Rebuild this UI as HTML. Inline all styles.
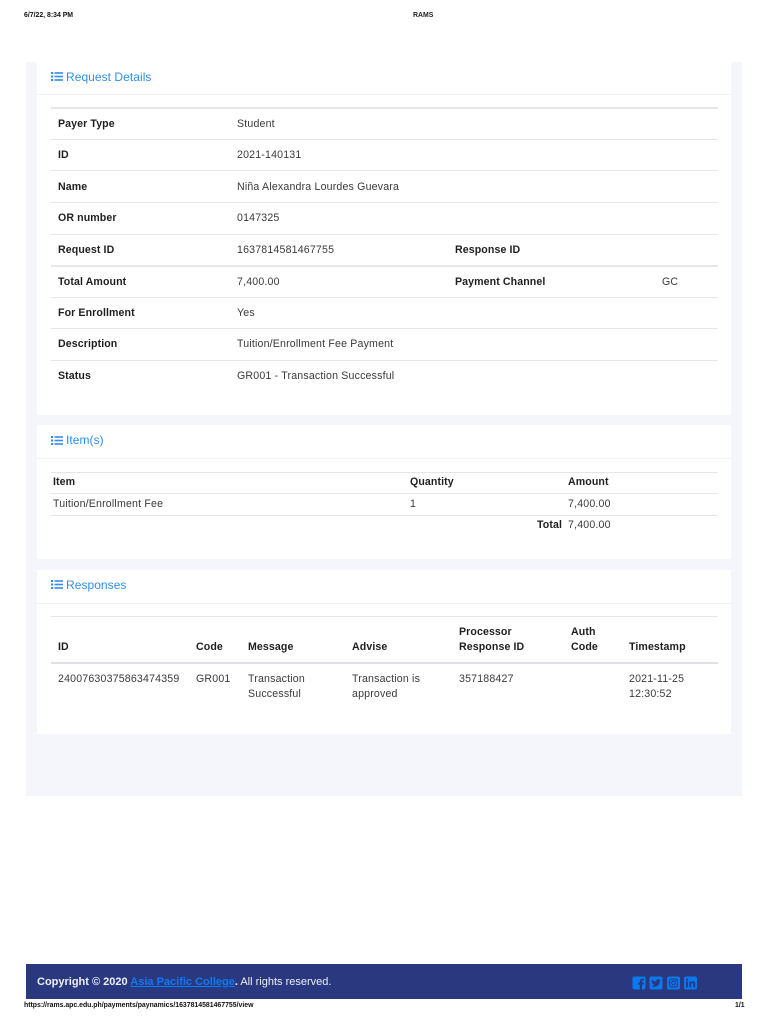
<!DOCTYPE html>
<html>
<head>
<meta charset="utf-8">
<title>RAMS</title>
<style>
html,body{margin:0;padding:0;background:#fff}
body{width:768px;height:1024px;position:relative;overflow:hidden;font-family:"Liberation Sans",sans-serif;color:#333}
div,a,svg{position:absolute}
.t{font-size:10.6px;line-height:14px;white-space:nowrap;color:#3a3a3a;letter-spacing:.18px}
.b{font-weight:700;color:#1f1f1f;letter-spacing:.1px}
.h{font-size:12px;line-height:16px;white-space:nowrap;color:#2f8fe8;letter-spacing:.05px}
.p{font-size:6.9px;line-height:8px;white-space:nowrap;color:#111;font-weight:700}
.l{left:51px;width:667px;height:1px;background:#e4e6ea}
.c{left:37px;width:694px;background:#fff}
.r{left:37px;width:694px;height:1px;background:#f1f2f5}
</style>
</head>
<body>
<div class="p" style="left:24px;top:12px">6/7/22, 8:34 PM</div>
<div class="p" style="left:413px;top:12px;color:#222">RAMS</div>

<div style="left:26px;top:62px;width:716px;height:734px;background:#f4f6fb"></div>

<div class="c" style="top:62px;height:353px"></div>
<div class="c" style="top:425px;height:134px"></div>
<div class="c" style="top:570px;height:164px"></div>
<div class="r" style="top:94px"></div>
<div class="r" style="top:458px"></div>
<div class="r" style="top:603px"></div>

<svg style="left:51px;top:71px" width="12" height="11" viewBox="0 0 12 11"><g fill="#2f8fe8"><rect x="0" y="1" width="2.2" height="2"/><rect x="0" y="4.5" width="2.2" height="2"/><rect x="0" y="8" width="2.2" height="2"/><rect x="3.5" y="1.2" width="8.5" height="1.6"/><rect x="3.5" y="4.7" width="8.5" height="1.6"/><rect x="3.5" y="8.2" width="8.5" height="1.6"/></g></svg>
<div class="h" style="left:66px;top:69px">Request Details</div>
<svg style="left:51px;top:435px" width="12" height="11" viewBox="0 0 12 11"><g fill="#2f8fe8"><rect x="0" y="1" width="2.2" height="2"/><rect x="0" y="4.5" width="2.2" height="2"/><rect x="0" y="8" width="2.2" height="2"/><rect x="3.5" y="1.2" width="8.5" height="1.6"/><rect x="3.5" y="4.7" width="8.5" height="1.6"/><rect x="3.5" y="8.2" width="8.5" height="1.6"/></g></svg>
<div class="h" style="left:66px;top:432px">Item(s)</div>
<svg style="left:51px;top:579px" width="12" height="11" viewBox="0 0 12 11"><g fill="#2f8fe8"><rect x="0" y="1" width="2.2" height="2"/><rect x="0" y="4.5" width="2.2" height="2"/><rect x="0" y="8" width="2.2" height="2"/><rect x="3.5" y="1.2" width="8.5" height="1.6"/><rect x="3.5" y="4.7" width="8.5" height="1.6"/><rect x="3.5" y="8.2" width="8.5" height="1.6"/></g></svg>
<div class="h" style="left:66px;top:577px">Responses</div>

<!-- Request details lines -->
<div class="l" style="top:107px;height:2px"></div>
<div class="l" style="top:139px"></div>
<div class="l" style="top:170px"></div>
<div class="l" style="top:202px"></div>
<div class="l" style="top:234px"></div>
<div class="l" style="top:265px;height:2px"></div>
<div class="l" style="top:297px"></div>
<div class="l" style="top:328px"></div>
<div class="l" style="top:360px"></div>

<div class="t b" style="left:58px;top:117px">Payer Type</div>
<div class="t" style="left:237px;top:117px">Student</div>
<div class="t b" style="left:58px;top:148px">ID</div>
<div class="t" style="left:237px;top:148px">2021-140131</div>
<div class="t b" style="left:58px;top:180px">Name</div>
<div class="t" style="left:237px;top:180px">Niña Alexandra Lourdes Guevara</div>
<div class="t b" style="left:58px;top:211px">OR number</div>
<div class="t" style="left:237px;top:211px">0147325</div>
<div class="t b" style="left:58px;top:243px">Request ID</div>
<div class="t" style="left:237px;top:243px">1637814581467755</div>
<div class="t b" style="left:455px;top:243px">Response ID</div>
<div class="t b" style="left:58px;top:275px">Total Amount</div>
<div class="t" style="left:237px;top:275px">7,400.00</div>
<div class="t b" style="left:455px;top:275px">Payment Channel</div>
<div class="t" style="left:662px;top:275px">GC</div>
<div class="t b" style="left:58px;top:306px">For Enrollment</div>
<div class="t" style="left:237px;top:306px">Yes</div>
<div class="t b" style="left:58px;top:337px">Description</div>
<div class="t" style="left:237px;top:337px">Tuition/Enrollment Fee Payment</div>
<div class="t b" style="left:58px;top:369px">Status</div>
<div class="t" style="left:237px;top:369px">GR001 - Transaction Successful</div>

<!-- Items -->
<div class="l" style="top:472px"></div>
<div class="l" style="top:493px"></div>
<div class="l" style="top:515px"></div>
<div class="t b" style="left:53px;top:475px">Item</div>
<div class="t b" style="left:410px;top:475px">Quantity</div>
<div class="t b" style="left:568px;top:475px">Amount</div>
<div class="t" style="left:53px;top:497px">Tuition/Enrollment Fee</div>
<div class="t" style="left:410px;top:497px">1</div>
<div class="t" style="left:568px;top:497px">7,400.00</div>
<div class="t b" style="left:537px;top:518px">Total</div>
<div class="t" style="left:568px;top:518px">7,400.00</div>

<!-- Responses -->
<div class="l" style="top:616px"></div>
<div class="l" style="top:662px;height:2px;background:#dfe1e5"></div>
<div class="t b" style="left:58px;top:640px">ID</div>
<div class="t b" style="left:196px;top:640px">Code</div>
<div class="t b" style="left:248px;top:640px">Message</div>
<div class="t b" style="left:352px;top:640px">Advise</div>
<div class="t b" style="left:459px;top:625px">Processor</div>
<div class="t b" style="left:459px;top:640px">Response ID</div>
<div class="t b" style="left:571px;top:625px">Auth</div>
<div class="t b" style="left:571px;top:640px">Code</div>
<div class="t b" style="left:629px;top:640px">Timestamp</div>
<div class="t" style="left:58px;top:672px">24007630375863474359</div>
<div class="t" style="left:196px;top:672px">GR001</div>
<div class="t" style="left:248px;top:672px">Transaction</div>
<div class="t" style="left:248px;top:687px">Successful</div>
<div class="t" style="left:352px;top:672px">Transaction is</div>
<div class="t" style="left:352px;top:687px">approved</div>
<div class="t" style="left:459px;top:672px">357188427</div>
<div class="t" style="left:629px;top:672px">2021-11-25</div>
<div class="t" style="left:629px;top:687px">12:30:52</div>

<!-- Footer -->
<div style="left:26px;top:964px;width:716px;height:35px;background:#2a3880"></div>
<div class="t" style="left:37px;top:975px;color:#eef0f6;font-size:11px;letter-spacing:0"><b>Copyright © 2020 <span style="color:#0d7bf2;text-decoration:underline">Asia Pacific College</span>.</b> All rights reserved.</div>

<svg style="left:632px;top:976px" width="66" height="14" viewBox="0 0 66 14">
<g fill="#0b78ee">
<rect x="0.5" y="0.5" width="13" height="13" rx="2"/>
<rect x="17.5" y="0.5" width="13" height="13" rx="2"/>
<rect x="35" y="0.5" width="13" height="13" rx="2"/>
<rect x="52" y="0.5" width="13" height="13" rx="2"/>
</g>
<path d="M10 13.5V8.6h1.7l.3-2H10V5.4c0-.6.3-1 1-1h1V2.7h-1.6C8.7 2.7 7.8 3.7 7.8 5.2v1.4H6.2v2h1.6v4.9z" fill="#2a3880"/>
<path d="M23 3a10.900 10.900 0 0 1-3 1.340 4.480 4.480 0 0 0-7.860 3v1A10.660 10.660 0 0 1 3 4s-4 9 5 13a11.640 11.640 0 0 1-7 2c9 5 20 0 20-11.500a4.500 4.500 0 0 0-.080-.830A7.720 7.720 0 0 0 23 3z" fill="#2a3880" transform="translate(19 2) scale(.42)"/>
<rect x="37.500" y="3" width="8" height="8" rx="2.200" fill="none" stroke="#2a3880" stroke-width="1.100"/>
<circle cx="41.500" cy="7" r="1.900" fill="none" stroke="#2a3880" stroke-width="1.100"/>
<circle cx="44" cy="4.500" r=".5" fill="#2a3880"/>
<g fill="#2a3880">
<rect x="54" y="5.500" width="1.900" height="6"/>
<circle cx="55" cy="3.600" r="1.100"/>
<path d="M57.300 5.500h1.800v.8c.4-.6 1-1 1.900-1 1.600 0 2.200 1 2.200 2.700v3.500h-1.900V8.400c0-.8-.2-1.400-1-1.400s-1.100.6-1.100 1.400v3.100h-1.900z"/>
</g>
</svg>

<div class="p" style="left:24px;top:1002px">https://rams.apc.edu.ph/payments/paynamics/1637814581467755/view</div>
<div class="p" style="left:735px;top:1002px">1/1</div>
</body>
</html>
